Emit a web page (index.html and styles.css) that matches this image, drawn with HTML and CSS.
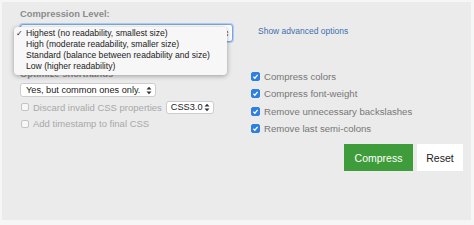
FILE: index.html
```html
<!DOCTYPE html>
<html lang="en">

<head>
    <meta charset="UTF-8">
    <title>CSS Compressor</title>
    <link rel="stylesheet" href="styles.css">
</head>

<body>
    <div class="panel">
        <!-- Left column: levels and shorthands -->
        <div class="col-left">
            <div class="field-label">Compression Level:</div>
            <div class="level-wrap">
                <div class="select select-focus select-level">
                    <span></span>
                    <svg class="arrows" width="6" height="9" viewBox="0 0 6 9"><path d="M0.5 3.5 L3 0.8 L5.5 3.5 Z M0.5 5.5 L3 8.2 L5.5 5.5 Z" fill="#333"/></svg>
                </div>
                <ul class="menu">
                    <li class="selected">Highest (no readability, smallest size)</li>
                    <li>High (moderate readability, smaller size)</li>
                    <li>Standard (balance between readability and size)</li>
                    <li>Low (higher readability)</li>
                </ul>
            </div>

            <div class="field-label short-label">Optimize shorthands</div>
            <div class="select select-short">
                <span>Yes, but common ones only.</span>
                <svg class="arrows" width="6" height="9" viewBox="0 0 6 9"><path d="M0.5 3.5 L3 0.8 L5.5 3.5 Z M0.5 5.5 L3 8.2 L5.5 5.5 Z" fill="#333"/></svg>
            </div>

            <div class="row row-first">
                <span class="box"></span>
                <span class="muted">Discard invalid CSS properties</span>
                <div class="select select-css">
                    <span>CSS3.0</span>
                    <svg class="arrows" width="6" height="9" viewBox="0 0 6 9"><path d="M0.5 3.5 L3 0.8 L5.5 3.5 Z M0.5 5.5 L3 8.2 L5.5 5.5 Z" fill="#333"/></svg>
                </div>
            </div>
            <div class="row">
                <span class="box"></span>
                <span class="muted">Add timestamp to final CSS</span>
            </div>
        </div>

        <!-- Right column: options and actions -->
        <div class="col-right">
            <a class="advanced" href="#">Show advanced options</a>

            <div class="checks">
                <div class="check"><span class="box on"><svg width="7" height="7" viewBox="0 0 8 8"><path d="M1.6 4.2 L3.3 5.9 L6.4 2.2" stroke="#fff" stroke-width="1.5" fill="none"/></svg></span>Compress colors</div>
                <div class="check"><span class="box on"><svg width="7" height="7" viewBox="0 0 8 8"><path d="M1.6 4.2 L3.3 5.9 L6.4 2.2" stroke="#fff" stroke-width="1.5" fill="none"/></svg></span>Compress font-weight</div>
                <div class="check"><span class="box on"><svg width="7" height="7" viewBox="0 0 8 8"><path d="M1.6 4.2 L3.3 5.9 L6.4 2.2" stroke="#fff" stroke-width="1.5" fill="none"/></svg></span>Remove unnecessary backslashes</div>
                <div class="check"><span class="box on"><svg width="7" height="7" viewBox="0 0 8 8"><path d="M1.6 4.2 L3.3 5.9 L6.4 2.2" stroke="#fff" stroke-width="1.5" fill="none"/></svg></span>Remove last semi-colons</div>
            </div>

            <div class="actions">
                <button class="btn btn-green">Compress</button>
                <button class="btn btn-white">Reset</button>
            </div>
        </div>
    </div>
</body>

</html>
```

FILE: styles.css
```css
/* General */
body {
    margin: 0;
    padding: 2px 3px 4px 2px;
    background-color: #f6f6f6;
    font-family: "Liberation Sans", Arial, sans-serif;
    color: #333;
}

.panel {
    display: grid;
    grid-template-columns: 248px 1fr;
    height: 218px;
    box-sizing: border-box;
    background-color: #ebebeb;
}

/* Left column */
.col-left {
    padding: 6px 0 0 18px;
}

.field-label {
    font-size: 9.4px;
    font-weight: bold;
    line-height: 12px;
    color: #8c8c8c;
    margin-bottom: 4px;
    white-space: nowrap;
}

.short-label {
    line-height: 11px;
    margin: 26px 0 4px;
}

.level-wrap {
    position: relative;
}

.select {
    display: flex;
    align-items: center;
    justify-content: space-between;
    box-sizing: border-box;
    background-color: #fff;
    border: 1px solid #cdcdcd;
    border-radius: 3px;
    padding: 0 3px 0 5px;
    font-size: 9.6px;
    color: #222;
    white-space: nowrap;
}

.select-focus {
    border-color: #7aa7dc;
    box-shadow: 0 0 0 1px #b0cdef;
}

.select-level {
    width: 213px;
    height: 18px;
}

.select-short {
    width: 136px;
    height: 14px;
    font-size: 9.2px;
}

.select-css {
    width: 48px;
    height: 13px;
    margin-left: 4px;
    padding-left: 4px;
    font-size: 9.2px;
}

/* Open dropdown list */
.menu {
    position: absolute;
    z-index: 2;
    left: -6px;
    top: 3px;
    width: 213px;
    margin: 0;
    padding: 0.5px 0 2px;
    list-style: none;
    background-color: #f7f7f7;
    border-radius: 4px;
    box-shadow: 0 1px 5px rgba(0, 0, 0, 0.35);
    font-size: 8.6px;
    color: #222;
}

.menu li {
    height: 11.3px;
    line-height: 11.3px;
    padding-left: 12px;
    position: relative;
    white-space: nowrap;
}

.menu li.selected::before {
    content: "\2713";
    position: absolute;
    left: 2px;
    font-size: 8px;
}

/* Checkbox rows */
.row {
    display: flex;
    align-items: center;
    height: 17px;
    font-size: 9.5px;
    white-space: nowrap;
}

.row-first {
    height: 16px;
    margin-top: 2px;
}

.muted {
    color: #a8a8a8;
}

.box {
    display: inline-flex;
    align-items: center;
    justify-content: center;
    box-sizing: border-box;
    width: 8px;
    height: 8px;
    margin: 0 4px 0 1px;
    border: 1px solid #c4c4c4;
    border-radius: 2px;
    background-color: #f7f7f7;
}

.box.on {
    width: 9px;
    height: 9px;
    background-color: #2f7fe0;
    border-color: #2f7fe0;
}

/* Right column */
.col-right {
    padding: 24px 0 0 0;
}

.advanced {
    display: block;
    margin-left: 8px;
    font-size: 8.5px;
    line-height: 11px;
    color: #3f6fae;
    text-decoration: none;
    height: 42px;
}

.checks {
    font-size: 9.6px;
    color: #777;
}

.check {
    display: flex;
    align-items: center;
    height: 17.3px;
    white-space: nowrap;
}

.check .box {
    margin: 0 4px 0 1px;
}

.actions {
    display: flex;
    justify-content: flex-end;
    gap: 4px;
    margin: 7px 8px 0 0;
}

.btn {
    height: 27px;
    border: none;
    font-family: inherit;
    font-size: 10.5px;
    padding: 0;
    cursor: pointer;
}

.btn-green {
    width: 69px;
    background-color: #3f9c3a;
    color: #fff;
}

.btn-white {
    width: 46px;
    background-color: #fff;
    color: #222;
}
```
